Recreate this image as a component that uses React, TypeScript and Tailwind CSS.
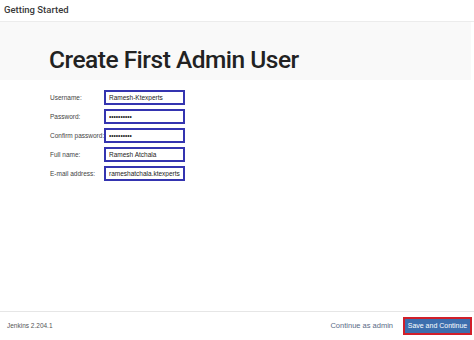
import React from 'react';

const fields = [
  { label: 'Username:', value: 'Ramesh-Ktexperts', type: 'text' },
  { label: 'Password:', value: 'ramesh1234', type: 'password' },
  { label: 'Confirm password:', value: 'ramesh1234', type: 'password' },
  { label: 'Full name:', value: 'Ramesh Atchala', type: 'text' },
  { label: 'E-mail address:', value: 'rameshatchala.ktexperts@gmail.com', type: 'text' },
];

export default function App() {
  return (
    <div className="w-[474px] h-[340px] bg-white flex flex-col font-['Roboto','Liberation_Sans',sans-serif] overflow-hidden">
      {/* Header */}
      <div className="h-[22px] flex items-center px-[4px] border-b border-[#ececec]">
        <span className="text-[9.5px] font-medium text-[#3a3a3a]">Getting Started</span>
      </div>

      {/* Body */}
      <div className="flex-1 flex flex-col">
        <div className="h-[58px] bg-[#f9f9f9] mr-[3px] flex items-end pl-[49px] pb-[3px]">
          <h1 className="text-[24.5px] leading-[34px] font-medium text-[#222] tracking-[-0.5px]">Create First Admin User</h1>
        </div>
        <div className="pl-[50px] pt-[10px] flex flex-col gap-[4px] font-['Liberation_Sans',sans-serif]">
          {fields.map((f) => (
            <div key={f.label} className="flex items-center h-[15px]">
              <label className="w-[54px] text-[6.5px] text-[#444] whitespace-nowrap">{f.label}</label>
              <input
                readOnly
                type={f.type}
                value={f.value}
                className="w-[81px] h-[15px] border-2 border-[#3434b0] px-[3px] text-[6.5px] text-[#222] outline-none bg-white"
              />
            </div>
          ))}
        </div>
      </div>

      {/* Footer */}
      <div className="h-[29px] border-t border-[#e6e6e6] flex items-center justify-between pl-[7px] pr-[2px] font-['Liberation_Sans',sans-serif]">
        <span className="text-[6.5px] text-[#555]">Jenkins 2.204.1</span>
        <div className="flex items-center gap-[10px]">
          <span className="text-[7.5px] text-[#5a6b86]">Continue as admin</span>
          <button className="h-[18px] w-[69px] bg-[#3c6fae] border-2 border-[#d11f2a] text-white text-[7px] font-medium whitespace-nowrap">
            Save and Continue
          </button>
        </div>
      </div>
    </div>
  );
}
